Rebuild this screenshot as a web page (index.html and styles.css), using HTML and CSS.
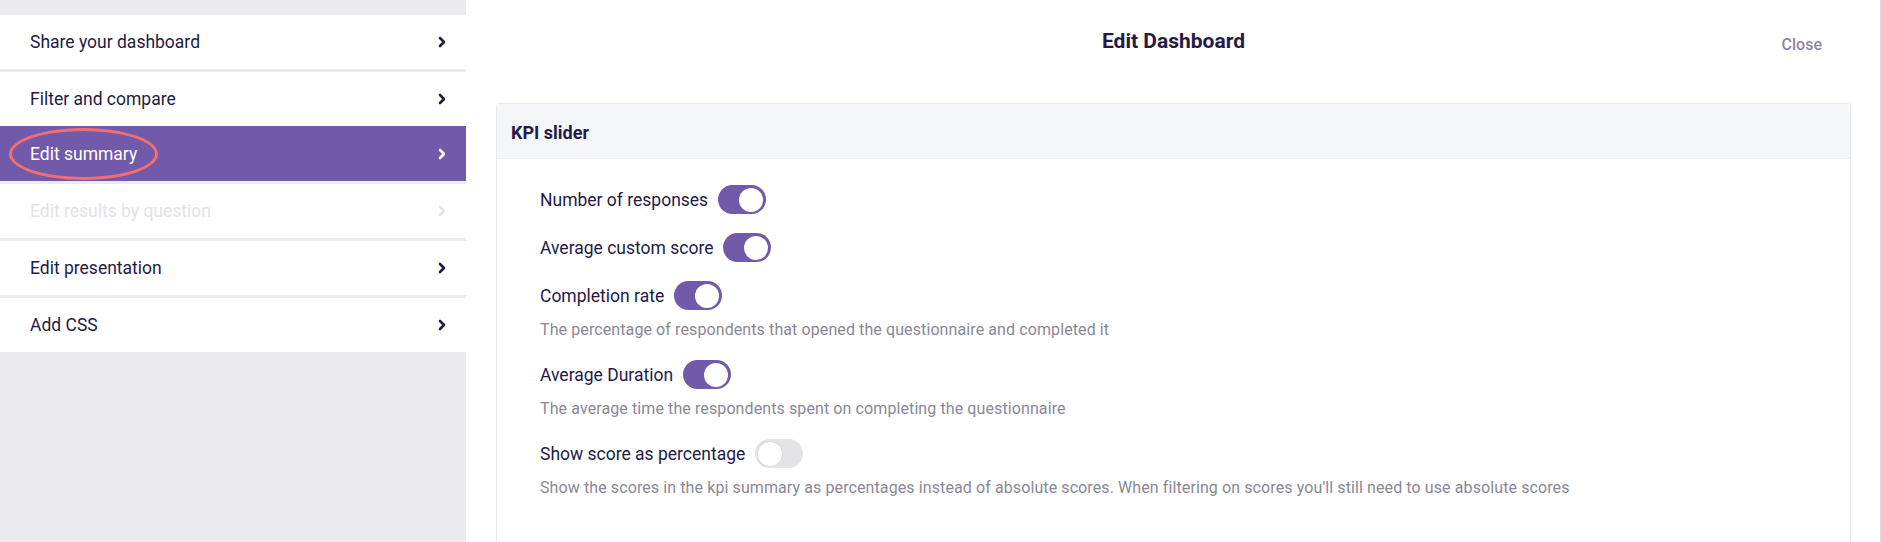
FILE: index.html
```html
<!DOCTYPE html>
<html lang="en">
<head>
<meta charset="utf-8">
<title>Edit Dashboard</title>
<link rel="stylesheet" href="styles.css">
</head>
<body>
<div class="app">
  <aside class="sidebar">
    <nav class="menu">
      <a class="item">Share your dashboard<svg class="chev" viewBox="0 0 8 12"><polyline points="2,2 6,6 2,10"/></svg></a>
      <a class="item">Filter and compare<svg class="chev" viewBox="0 0 8 12"><polyline points="2,2 6,6 2,10"/></svg></a>
      <a class="item active"><span class="label-wrap">Edit summary<span class="ring"></span></span><svg class="chev" viewBox="0 0 8 12"><polyline points="2,2 6,6 2,10"/></svg></a>
      <a class="item disabled">Edit results by question<svg class="chev" viewBox="0 0 8 12"><polyline points="2,2 6,6 2,10"/></svg></a>
      <a class="item">Edit presentation<svg class="chev" viewBox="0 0 8 12"><polyline points="2,2 6,6 2,10"/></svg></a>
      <a class="item">Add CSS<svg class="chev" viewBox="0 0 8 12"><polyline points="2,2 6,6 2,10"/></svg></a>
    </nav>
  </aside>
  <main class="main">
    <header class="topbar">
      <h1 class="title">Edit Dashboard</h1>
      <button class="close">Close</button>
    </header>
    <section class="card">
      <div class="card-head">KPI slider</div>
      <div class="card-body">
        <div class="field">
          <div class="row"><span class="lbl">Number of responses</span><span class="toggle on"><span class="knob"></span></span></div>
        </div>
        <div class="field">
          <div class="row"><span class="lbl">Average custom score</span><span class="toggle on"><span class="knob"></span></span></div>
        </div>
        <div class="field">
          <div class="row"><span class="lbl">Completion rate</span><span class="toggle on"><span class="knob"></span></span></div>
          <p class="desc">The percentage of respondents that opened the questionnaire and completed it</p>
        </div>
        <div class="field">
          <div class="row"><span class="lbl">Average Duration</span><span class="toggle on"><span class="knob"></span></span></div>
          <p class="desc">The average time the respondents spent on completing the questionnaire</p>
        </div>
        <div class="field">
          <div class="row"><span class="lbl">Show score as percentage</span><span class="toggle"><span class="knob"></span></span></div>
          <p class="desc">Show the scores in the kpi summary as percentages instead of absolute scores. When filtering on scores you'll still need to use absolute scores</p>
        </div>
      </div>
    </section>
  </main>
</div>
</body>
</html>
```
FILE: styles.css
```css
* { box-sizing: border-box; }
html, body { margin: 0; padding: 0; }
body {
  width: 1881px;
  height: 542px;
  overflow: hidden;
  font-family: Roboto, "Liberation Sans", sans-serif;
  color: #231b45;
  background: #fff;
}
.app {
  display: flex;
  height: 542px;
}
.sidebar {
  width: 466px;
  flex: 0 0 466px;
  background: #ebebf0;
  padding-top: 15px;
}
.menu {
  display: flex;
  flex-direction: column;
  gap: 3px;
}
.item {
  height: 54px;
  background: #fff;
  display: flex;
  align-items: center;
  justify-content: space-between;
  padding: 0 20px 0 30px;
  font-size: 17.5px;
  color: #231b45;
}
.item.active {
  background: #715aa9;
  color: #fff;
  margin-top: -3px;
  height: 55px;
}
.item.disabled {
  color: #e2e2e8;
}
.label-wrap {
  position: relative;
}
.ring {
  position: absolute;
  left: -21px;
  top: -16px;
  width: 149px;
  height: 52px;
  border: 3px solid #f36f6f;
  border-radius: 50%;
}
.chev {
  width: 8px;
  height: 12px;
  fill: none;
  stroke: #231b45;
  stroke-width: 2.6;
  stroke-linecap: round;
  stroke-linejoin: round;
}
.item.active .chev { stroke: #fff; }
.item.disabled .chev { stroke: #e2e2e8; }
.main {
  flex: 1;
  border-right: 1px solid #dcdce2;
  padding: 0 29px 0 30px;
}
.topbar {
  position: relative;
  height: 103px;
  display: flex;
  align-items: flex-start;
  justify-content: center;
}
.title {
  margin: 29px 0 0;
  font-size: 21px;
  font-weight: 700;
  line-height: 25px;
  color: #231b45;
}
.close {
  position: absolute;
  right: 29px;
  top: 35px;
  background: none;
  border: 0;
  padding: 0;
  font-family: inherit;
  font-size: 16px;
  font-weight: 500;
  line-height: 20px;
  color: #8c86a2;
}
.card {
  border: 1px solid #e7e8ed;
  border-bottom: 0;
  border-radius: 4px 4px 0 0;
  height: 440px;
}
.card-head {
  height: 55px;
  background: #f5f6f8;
  border-bottom: 1px solid #eeeff2;
  display: flex;
  align-items: center;
  padding-left: 14px;
  font-size: 18px;
  font-weight: 700;
  color: #231b45;
  padding-top: 2px;
}
.card-body {
  padding: 26px 0 0 43px;
  display: flex;
  flex-direction: column;
  gap: 19px;
}
.row {
  display: flex;
  align-items: center;
  gap: 10px;
  height: 29px;
}
.lbl {
  font-size: 17.5px;
  color: #231b45;
}
.toggle {
  width: 48px;
  height: 29px;
  border-radius: 15px;
  background: #e4e4e6;
  position: relative;
  display: flex;
  align-items: center;
  padding: 0 3px;
}
.toggle .knob {
  width: 24px;
  height: 24px;
  border-radius: 50%;
  background: #fff;
  box-shadow: 0 0 0 1px #dcdcde;
}
.toggle.on {
  background: #715aa9;
  justify-content: flex-end;
}
.toggle.on .knob { box-shadow: none; }
.desc {
  margin: 10px 0 1px;
  font-size: 16px;
  line-height: 20px;
  letter-spacing: 0.1px;
  color: #8a8896;
}
```
